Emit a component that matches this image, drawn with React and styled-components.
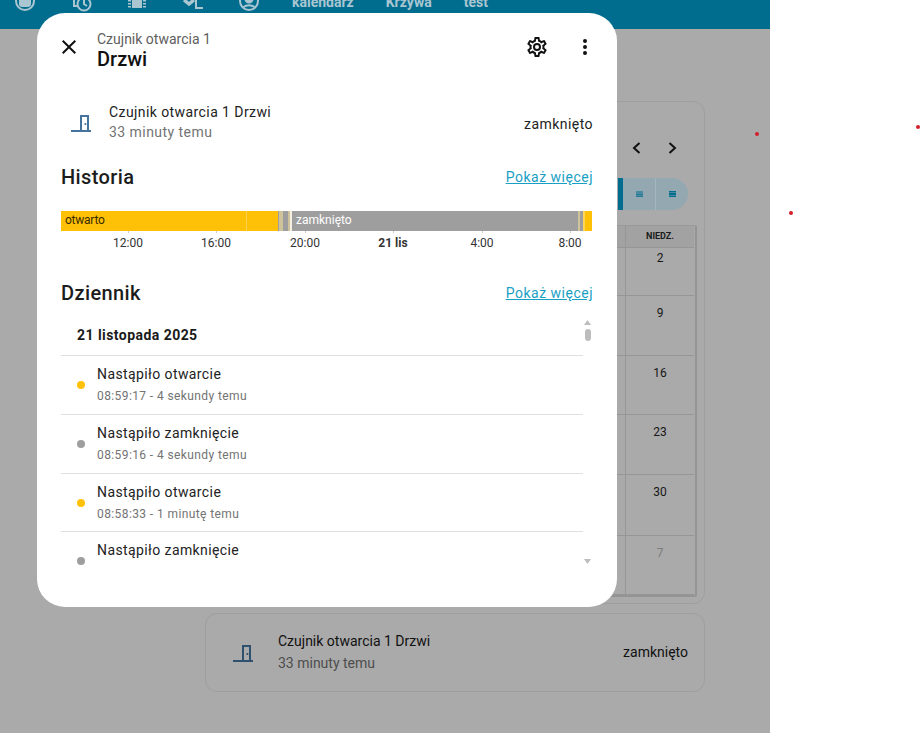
import React from "react";
import styled, { createGlobalStyle } from "styled-components";

const Global = createGlobalStyle`
  html, body { margin: 0; padding: 0; background: #fff; }
  body { font-family: Roboto, "Noto Sans", sans-serif; color: #1a1a1a; }
  * { box-sizing: border-box; }
`;
const Stage = styled.div`position: relative; width: 921px; height: 733px; overflow: hidden; background: #fff;`;
const AppShell = styled.div`width: 770px; height: 733px; background: #aaaaaa; display: flex; flex-direction: column;`;
const TopBar = styled.div`height: 29px; background: #006d8f; display: flex; align-items: flex-start; overflow: hidden; padding-left: 13px; color: #a9c6d1;`;
const TabIcon = styled.div`width: 24px; height: 24px; margin-top: -11px; margin-right: ${p => p.$gap}px; flex: none;`;
const TabText = styled.div`font-size: 14px; font-weight: 700; line-height: 16px; margin-top: -6px; margin-right: ${p => p.$gap}px; color: #a9c6d1;`;
const Content = styled.div`padding: 72px 0 0 205px; display: flex; flex-direction: column; gap: 9px;`;
const Card = styled.div`width: 500px; border: 1px solid #9e9e9e; border-radius: 12px;`;
const CalendarCard = styled(Card)`height: 503px; padding: 123px 7px 0 2px; position: relative;`;
const NavArrows = styled.div`position: absolute; top: 39px; right: 25px; display: flex; gap: 21px; color: #111;`;
const ViewSwitch = styled.div`position: absolute; top: 76px; right: 16px; width: 70px; height: 32px; display: flex; border-radius: 0 16px 16px 0; background: #93a8b1; overflow: hidden;`;
const ViewActive = styled.div`width: 5px; background: #006d8f;`;
const ViewButton = styled.div`flex: 1; display: flex; align-items: center; justify-content: center; border-right: 1px solid #a4b5bc; color: #006d8f; &:last-child { border-right: 0; }`;
const Grid = styled.div`display: grid; grid-template-columns: repeat(6, 69.5px) 68px; grid-template-rows: 22px 48px 60px 59px 60px 61px 59px; border: 1px solid #9a9a9a; border-right: 2px solid #949494; border-bottom: 2px solid #949494; border-radius: 2px;`;
const HeadCell = styled.div`background: #a2a2a2; border-right: 1px solid #969696; border-bottom: 1px solid #969696; font-size: 9px; font-weight: 700; color: #1a1a1a; text-align: center; line-height: 21px; &:nth-child(7) { border-right: 0; }`;
const DayCell = styled.div`border-right: 1px solid #969696; border-bottom: 1px solid #969696; font-size: 12px; text-align: center; padding-top: ${p => p.$pad}px; color: ${p => p.$muted ? "#7d7d7d" : "#161616"};
  &:nth-child(7n) { border-right: 0; }`;
const EntityRow = styled.div`display: flex; align-items: center; color: #111;`;
const BackRow = styled(EntityRow)`height: 77px; padding: 0 16px 2px 25px;`;
const DoorSlot = styled.div`width: 24px; height: 24px; flex: none; color: ${p => p.$c};`;
const EntityText = styled.div`flex: 1; margin-left: ${p => p.$l}px; min-width: 0;`;
const EntityName = styled.div`font-size: 14px; line-height: ${p => p.$lh}px; letter-spacing: ${p => p.$ls}px; color: ${p => p.$c};`;
const EntitySub = styled.div`font-size: 14px; line-height: ${p => p.$lh}px; letter-spacing: ${p => p.$ls}px; color: ${p => p.$c};`;
const EntityState = styled.div`font-size: 14px; letter-spacing: ${p => p.$ls}px; padding-top: ${p => p.$top}px; color: ${p => p.$c};`;
const Dot = styled.div`position: absolute; width: 4px; height: 4px; border-radius: 50%; background: #d21f2e; left: ${p => p.$x}px; top: ${p => p.$y}px;`;
const Dialog = styled.div`position: absolute; left: 37px; top: 13px; width: 580px; height: 594px; background: #fff; border-radius: 28px; overflow: hidden; padding: 0 24px;`;
const DialogHead = styled.div`height: 72px; display: flex; align-items: center; margin: 0 0 0 -4px;`;
const CloseBtn = styled.div`width: 24px; height: 24px; flex: none; margin-top: -4px; color: #111; margin-right: 16px;`;
const HeadTitles = styled.div`flex: 1; padding-top: 4px;`;
const HeadSub = styled.div`font-size: 14px; line-height: 14px; margin-bottom: 1px; color: #5e5e5e;`;
const HeadTitle = styled.div`font-size: 20px; font-weight: 500; line-height: 24px; color: #111;`;
const HeadAction = styled.div`width: 24px; height: 24px; flex: none; margin-left: ${p => p.$m}px; margin-top: -4px; margin-right: ${p => p.$r || 0}px; color: #111;`;
const DialogRow = styled(EntityRow)`height: 40px; margin-top: 17px; padding: 0 0 0 8px;`;
const SectionHead = styled.div`display: flex; justify-content: space-between; align-items: center; margin-top: ${p => p.$top}px; height: 24px;`;
const SectionTitle = styled.div`font-size: 20px; font-weight: 500; letter-spacing: .4px; color: #1c1c1c;`;
const MoreLink = styled.a`font-size: 14px; letter-spacing: .5px; color: #1a9fc4; text-decoration: underline;`;
const TimelineBar = styled.div`display: flex; height: 20px; margin-top: 22px; width: 531px; position: relative;`;
const Seg = styled.div`height: 100%; background: ${p => p.$c}; flex: none;`;
const BarLabel = styled.span`position: absolute; top: 0; left: ${p => p.$x}px; font-size: 12px; line-height: 18px; letter-spacing: ${p => p.$ls || 0}px; color: ${p => p.$c};`;
const Axis = styled.div`position: relative; height: 20px; width: 531px;`;
const AxisLabel = styled.span`position: absolute; left: ${p => p.$x}px; top: 5px; transform: translateX(-50%); font-size: 12px; line-height: 14px; font-weight: ${p => p.$b ? 700 : 400}; color: #333;`;
const AxisTick = styled.i`position: absolute; left: ${p => p.$x}px; top: 0; height: 2px; width: 1px; background: #ccc;`;
const LogList = styled.div`position: relative; width: 531px; height: 254px; margin-top: 7px; overflow: hidden;`;
const LogInner = styled.div`width: 522px;`;
const LogDate = styled.div`height: 44px; padding: 2px 16px 0; font-size: 14px; font-weight: 700; letter-spacing: .45px; line-height: 43px; color: #1a1a1a; border-bottom: 1px solid #e0e0e0;`;
const LogItem = styled.div`height: ${p => p.$h}px; display: flex; align-items: center; padding-left: 16px; border-bottom: 1px solid #e0e0e0;`;
const LogDot = styled.div`width: 8px; height: 8px; border-radius: 50%; flex: none; background: ${p => p.$c}; margin-right: 12px;`;
const LogBody = styled.div`padding-bottom: 2px;`;
const LogName = styled.div`font-size: 14px; letter-spacing: .4px; line-height: 20px; color: #222;`;
const LogMeta = styled.div`font-size: 12px; letter-spacing: .4px; line-height: 16px; margin-top: 4px; color: #737373;`;
const ScrollArrow = styled.svg`position: absolute; right: 1px; width: 7px; height: 5px; top: ${p => p.$y}px; fill: #bdbdbd;`;
const ScrollThumb = styled.div`position: absolute; right: 1px; top: 17px; width: 6px; height: 12px; border-radius: 3px; background: #bdbdbd;`;

const DoorIcon = () => (
  <svg width="24" height="24" viewBox="0 0 24 24" fill="currentColor" fillRule="evenodd">
    <path d="M2 20H11V5H20V20H22V22H2ZM13 7V20H18V7ZM16.4 12.9a1.1 1.1 0 1 0 .01 0Z" />
  </svg>
);
const CloseIcon = () => <svg width="24" height="24" viewBox="0 0 24 24" fill="currentColor"><path d="M19 6.41 17.59 5 12 10.59 6.41 5 5 6.41 10.59 12 5 17.59 6.41 19 12 13.41 17.59 19 19 17.59 13.41 12z"/></svg>;
const GearIcon = () => <svg width="24" height="24" viewBox="0 0 24 24" fill="currentColor"><path d="M12,8A4,4 0 0,1 16,12A4,4 0 0,1 12,16A4,4 0 0,1 8,12A4,4 0 0,1 12,8M12,10A2,2 0 0,0 10,12A2,2 0 0,0 12,14A2,2 0 0,0 14,12A2,2 0 0,0 12,10M10,22C9.75,22 9.54,21.82 9.5,21.58L9.13,18.93C8.5,18.68 7.96,18.34 7.44,17.94L4.95,18.95C4.73,19.03 4.46,18.95 4.34,18.73L2.34,15.27C2.21,15.05 2.27,14.78 2.46,14.63L4.57,12.97L4.5,12L4.57,11L2.46,9.37C2.27,9.22 2.21,8.95 2.34,8.73L4.34,5.27C4.46,5.05 4.73,4.96 4.95,5.05L7.44,6.05C7.96,5.66 8.5,5.32 9.13,5.07L9.5,2.42C9.54,2.18 9.75,2 10,2H14C14.25,2 14.46,2.18 14.5,2.42L14.87,5.07C15.5,5.32 16.04,5.66 16.56,6.05L19.05,5.05C19.27,4.96 19.54,5.05 19.66,5.27L21.66,8.73C21.79,8.95 21.73,9.22 21.54,9.37L19.43,11L19.5,12L19.43,13L21.54,14.63C21.73,14.78 21.79,15.05 21.66,15.27L19.66,18.73C19.54,18.95 19.27,19.04 19.05,18.95L16.56,17.95C16.04,18.34 15.5,18.68 14.87,18.93L14.5,21.58C14.46,21.82 14.25,22 14,22H10M11.25,4L10.88,6.61C9.68,6.86 8.62,7.5 7.85,8.39L5.44,7.35L4.69,8.65L6.8,10.2C6.4,11.37 6.4,12.64 6.8,13.8L4.68,15.36L5.43,16.66L7.86,15.62C8.63,16.5 9.68,17.14 10.87,17.38L11.24,20H12.76L13.13,17.39C14.32,17.14 15.37,16.5 16.14,15.62L18.57,16.66L19.32,15.36L17.2,13.81C17.6,12.64 17.6,11.37 17.2,10.2L19.31,8.65L18.56,7.35L16.15,8.39C15.38,7.5 14.32,6.86 13.12,6.62L12.75,4H11.25Z"/></svg>;
const DotsIcon = () => <svg width="24" height="24" viewBox="0 0 24 24" fill="currentColor"><path d="M12,16A2,2 0 0,1 14,18A2,2 0 0,1 12,20A2,2 0 0,1 10,18A2,2 0 0,1 12,16M12,10A2,2 0 0,1 14,12A2,2 0 0,1 12,14A2,2 0 0,1 10,12A2,2 0 0,1 12,10M12,4A2,2 0 0,1 14,6A2,2 0 0,1 12,8A2,2 0 0,1 10,6A2,2 0 0,1 12,4Z"/></svg>;
const Chevron = ({ d }) => <svg width="14" height="14" viewBox="0 0 14 14" fill="none" stroke="currentColor" strokeWidth="2"><path d={d}/></svg>;
const Lines = ({ n }) => <svg width="7" height="8" viewBox="0 0 8 8" fill="currentColor">{n === 3 ? <path d="M0 1h8v1.4H0zM0 3.4h8v1.4H0zM0 5.8h8v1.4H0z"/> : <path d="M0 .6h8v1.2H0zM0 2.4h8v3.2H0zM0 6.2h8v1.2H0z"/>}</svg>;
const TabGlyph = ({ k }) => {
  const p = { width: 24, height: 24, viewBox: "0 0 24 24", fill: "none", stroke: "currentColor", strokeWidth: 2 };
  if (k === 0) return <svg {...p}><circle cx="12" cy="12" r="9"/><rect x="7" y="9" width="10" height="8" rx="2" fill="currentColor"/></svg>;
  if (k === 1) return <svg {...p}><circle cx="15" cy="15" r="6.5"/><path d="M15 11v4l3 2M2 4h3v13h3"/></svg>;
  if (k === 2) return <svg {...p} strokeWidth="0" fill="currentColor"><path d="M7 6h10v13H7zM3 8h3v1.6H3zM3 11h3v1.6H3zM3 14h3v1.6H3zM3 17h3v1.6H3zM18 8h3v1.6h-3zM18 11h3v1.6h-3zM18 14h3v1.6h-3zM18 17h3v1.6h-3z"/></svg>;
  if (k === 3) return <svg {...p}><path d="M3 11l5 4 5-4" strokeWidth="3.5"/><path d="M15 8v11h7"/></svg>;
  return <svg {...p}><circle cx="12" cy="12" r="9"/><circle cx="12" cy="10" r="3.5" fill="currentColor"/><path d="M6.5 18c3-2.5 8-2.5 11 0"/></svg>;
};

const Y = "#ffc107", G = "#9e9e9e", L = "#cfc39c";
const segments = [[185, Y], [1, "#ffd24d"], [31, Y], [1, G], [4, L], [5, G], [2, L], [2, "#f4efe0"], [286, G], [2, L], [3, G], [2, "#ffd65a"], [7, Y]];
const weeks = [2, 9, 16, 23, 30, 7];
const emptyDays = [0, 1, 2, 3, 4, 5];
const emptyHeads = [0, 1, 2, 3, 4, 5];
const ticks = [[67, "12:00"], [155, "16:00"], [244, "20:00"], [332, "21 lis", true], [421, "4:00"], [509, "8:00"]];
const logs = [
  ["Nastąpiło otwarcie", "08:59:17 - 4 sekundy temu", Y, 59],
  ["Nastąpiło zamknięcie", "08:59:16 - 4 sekundy temu", G, 59],
  ["Nastąpiło otwarcie", "08:58:33 - 1 minutę temu", Y, 58],
  ["Nastąpiło zamknięcie", "08:58:32 - 1 minutę temu", G, 59],
];

function BackRowCard() {
  return (
    <Card>
      <BackRow>
        <DoorSlot $c="#2f506e"><DoorIcon /></DoorSlot>
        <EntityText $l={23}>
          <EntityName $c="#111" $lh={22} $ls={0}>Czujnik otwarcia 1 Drzwi</EntityName>
          <EntitySub $c="#4d4d4d" $lh={22} $ls={0}>33 minuty temu</EntitySub>
        </EntityText>
        <EntityState $c="#111" $ls={0} $top={0}>zamknięto</EntityState>
      </BackRow>
    </Card>
  );
}

export default function App() {
  return (
    <Stage>
      <Global />
      <AppShell>
        <TopBar>
          {[0, 1, 2, 3].map(k => <TabIcon key={k} $gap={32}><TabGlyph k={k} /></TabIcon>)}
          <TabIcon $gap={31}><TabGlyph k={4} /></TabIcon>
          <TabText $gap={32}>kalendarz</TabText>
          <TabText $gap={32}>Krzywa</TabText>
          <TabText $gap={0}>test</TabText>
        </TopBar>
        <Content>
          <CalendarCard>
            <NavArrows>
              <Chevron d="M9.5 2 4 7l5.5 5" />
              <Chevron d="M4.5 2 10 7l-5.5 5" />
            </NavArrows>
            <ViewSwitch>
              <ViewActive />
              <ViewButton><Lines n={3} /></ViewButton>
              <ViewButton><Lines n={2} /></ViewButton>
            </ViewSwitch>
            <Grid>
              {emptyHeads.map(h => <HeadCell key={h} />)}
              <HeadCell>NIEDZ.</HeadCell>
              {weeks.map((w, i) => (
                <React.Fragment key={w}>
                  {emptyDays.map(j => <DayCell key={j} />)}
                  <DayCell $muted={w === 7} $pad={i === 0 ? 3 : 10}>{w}</DayCell>
                </React.Fragment>
              ))}
            </Grid>
          </CalendarCard>
          <BackRowCard />
        </Content>
      </AppShell>
      <Dot $x={755} $y={132} />
      <Dot $x={916} $y={125} />
      <Dot $x={789} $y={211} />
      <Dialog>
        <DialogHead>
          <CloseBtn><CloseIcon /></CloseBtn>
          <HeadTitles>
            <HeadSub>Czujnik otwarcia 1</HeadSub>
            <HeadTitle>Drzwi</HeadTitle>
          </HeadTitles>
          <HeadAction $m={0}><GearIcon /></HeadAction>
          <HeadAction $m={24} $r={-4}><DotsIcon /></HeadAction>
        </DialogHead>
        <DialogRow>
          <DoorSlot $c="#44739e"><DoorIcon /></DoorSlot>
          <EntityText $l={16}>
            <EntityName $c="#222" $lh={20} $ls={0.42}>Czujnik otwarcia 1 Drzwi</EntityName>
            <EntitySub $c="#737373" $lh={20} $ls={0.45}>33 minuty temu</EntitySub>
          </EntityText>
          <EntityState $c="#222" $ls={0.45} $top={4}>zamknięto</EntityState>
        </DialogRow>
        <SectionHead $top={23}>
          <SectionTitle>Historia</SectionTitle>
          <MoreLink>Pokaż więcej</MoreLink>
        </SectionHead>
        <TimelineBar>
          {segments.map(([w, c], i) => <Seg key={i} style={{ width: w }} $c={c} />)}
          <BarLabel $x={4} $c="#3a2a00" $ls={-0.25}>otwarto</BarLabel>
          <BarLabel $x={235} $c="#fff">zamknięto</BarLabel>
        </TimelineBar>
        <Axis>
          {ticks.map(([x, t, b]) => (
            <React.Fragment key={t}>
              <AxisTick $x={x} />
              <AxisLabel $x={x} $b={b}>{t}</AxisLabel>
            </React.Fragment>
          ))}
        </Axis>
        <SectionHead $top={30}>
          <SectionTitle>Dziennik</SectionTitle>
          <MoreLink>Pokaż więcej</MoreLink>
        </SectionHead>
        <LogList>
          <LogInner>
            <LogDate>21 listopada 2025</LogDate>
            {logs.map(([n, m, c, h]) => (
              <LogItem key={m} $h={h}>
                <LogDot $c={c} />
                <LogBody>
                  <LogName>{n}</LogName>
                  <LogMeta>{m}</LogMeta>
                </LogBody>
              </LogItem>
            ))}
          </LogInner>
          <ScrollArrow $y={8} viewBox="0 0 7 5"><path d="M3.5 0 7 5H0z" /></ScrollArrow>
          <ScrollThumb />
          <ScrollArrow $y={247} viewBox="0 0 7 5"><path d="M0 0h7L3.5 5z" /></ScrollArrow>
        </LogList>
      </Dialog>
    </Stage>
  );
}
